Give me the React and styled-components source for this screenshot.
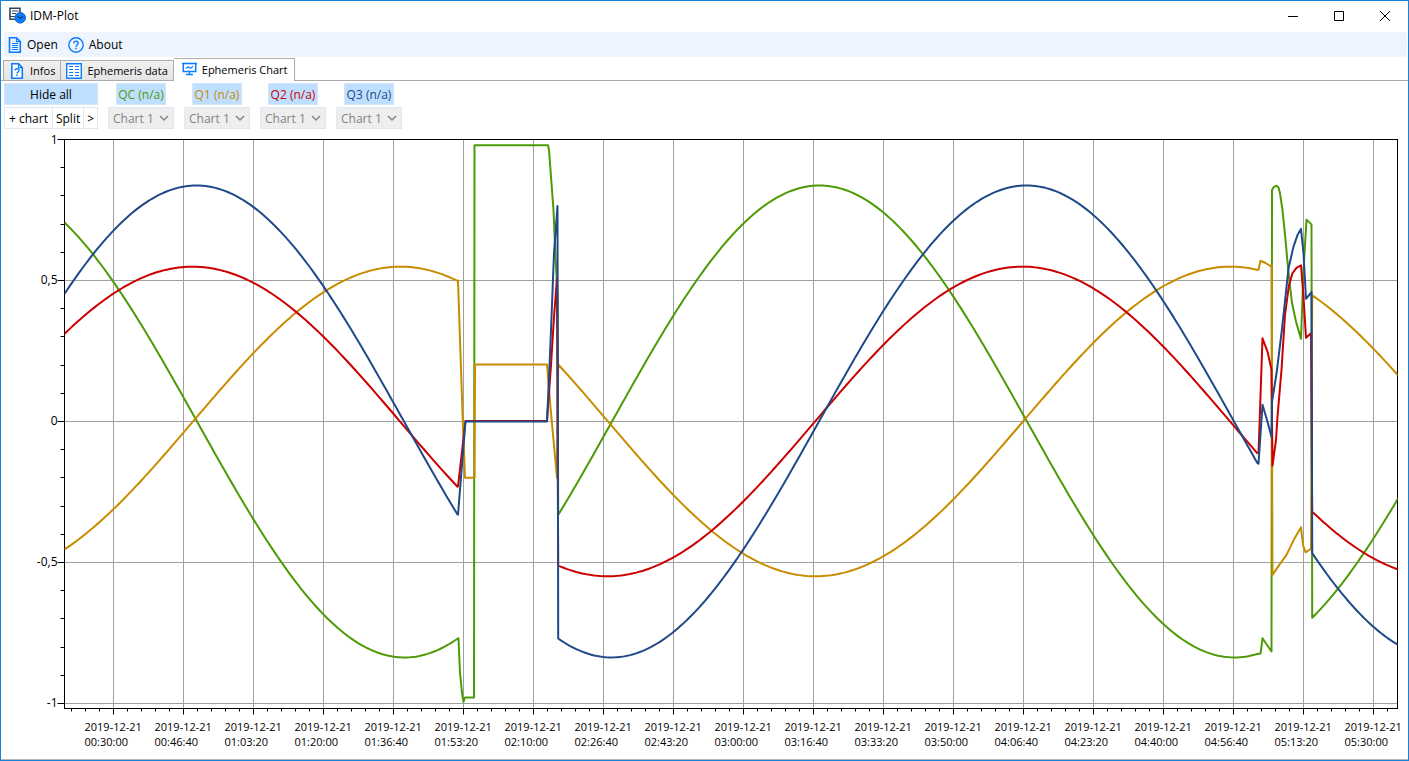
import React, { useLayoutEffect, useRef, useState } from "react";
import styled, { createGlobalStyle, css } from "styled-components";

const FONT = '"Open Sans", "Noto Sans", sans-serif';
const BLUE = "#0a7cff";

const GlobalStyle = createGlobalStyle`
  * {
    box-sizing: border-box;
  }

  body {
    margin: 0;
    background-color: white;
    color: black;
    font-family: ${FONT};
    font-size: 12px;
  }

  button, select {
    font: inherit;
    color: inherit;
  }
`;

const Window = styled.div`
  display: flex;
  flex-direction: column;
  height: 100vh;
  min-height: 400px;
  border: 1px solid #1883d7;
  background-color: white;
`;

const TitleBar = styled.header`
  display: flex;
  align-items: center;
  height: 31px;
  flex-shrink: 0;
  padding: 0 0 2px 8px;
`;

const Title = styled.h1`
  flex: 1;
  margin: 0 0 0 4px;
  font-size: 12px;
  font-weight: 400;
`;

const WindowButton = styled.button`
  display: flex;
  align-items: center;
  justify-content: center;
  width: 46px;
  height: 29px;
  padding: 0;
  border: none;
  background: none;

  &:hover {
    background-color: #e5e5e5;
  }
`;

const ToolBar = styled.nav`
  display: flex;
  align-items: center;
  gap: 10px;
  height: 25px;
  flex-shrink: 0;
  margin: 0 1px 0 3px;
  padding: 0 4px;
  border-radius: 3px;
  background-color: #edf4fd;
`;

const ToolButton = styled.button`
  display: flex;
  align-items: center;
  gap: 5px;
  padding: 0;
  border: none;
  background: none;
`;

const TabStrip = styled.div`
  display: flex;
  align-items: flex-end;
  height: 24px;
  flex-shrink: 0;
  padding-left: 2px;
  border-bottom: 1px solid #acacac;
`;

const Tab = styled.button`
  display: flex;
  align-items: center;
  gap: 5px;
  height: 20px;
  padding: 0 5px;
  border: 1px solid #acacac;
  border-bottom: none;
  background: linear-gradient(#f0f0f0, #e5e5e5);
  font-size: 11px;
  white-space: nowrap;

  & + & {
    border-left: none;
  }

  ${props =>
    props.$active &&
    css`
      height: 23px;
      margin-bottom: -1px;
      padding: 0 7px 2px 8px;
      background: white;
    `}
`;

const Controls = styled.div`
  display: flex;
  gap: 10px;
  flex-shrink: 0;
  padding: 2px 3px 0;
`;

const Column = styled.div`
  display: flex;
  flex-direction: column;
  align-items: center;
  gap: 2px;
  width: ${props => props.$width}px;
`;

const ButtonRow = styled.div`
  display: flex;
  width: 100%;
`;

const SmallButton = styled.button`
  flex: ${props => (props.$grow ? 1 : "none")};
  height: 22px;
  padding: 0 4px;
  border: 1px solid #e2e8f2;
  background-color: white;
  white-space: nowrap;

  & + & {
    border-left: none;
    padding: 0 3px;
  }
`;

const ToggleButton = styled.button`
  height: 22px;
  width: ${props => (props.$wide ? "100%" : "50px")};
  padding: 0;
  border: 1px solid #d4e6f8;
  background-color: #bedfff;
  color: ${props => props.$color || "black"};
  white-space: nowrap;
`;

const SelectBox = styled.div`
  position: relative;
  width: 100%;
  height: 22px;
  color: #838383;

  select {
    appearance: none;
    width: 100%;
    height: 100%;
    padding: 0 0 0 4px;
    border: 1px solid #e2e8f2;
    border-radius: 0;
    background-color: #eeeeee;
    opacity: 1;
  }

  svg {
    position: absolute;
    top: 8px;
    right: 5px;
    pointer-events: none;
  }
`;

const ChartArea = styled.main`
  flex: 1;
  min-height: 0;
  overflow: hidden;
  border-bottom: 1px solid #b8b8b8;

  svg {
    display: block;
  }
`;

const AxisText = styled.text`
  font-family: ${FONT};
  font-size: ${props => props.$size}px;
  fill: black;
`;

const AppIcon = () => (
  <svg width="17" height="17" viewBox="0 0 17 17" fill="none">
    <path d="M1 1.2H11V6M1 0.5V12.3H6" stroke="#34465c" strokeWidth="1.6" />
    <path d="M3 4H9.5M3 6.5H7M1 9.5H6" stroke="#34465c" strokeWidth="1.2" />
    <circle cx="11.2" cy="10.8" r="5.3" fill={BLUE} stroke="#1c5fb4" />
    <path d="M8.3 9L11 11.4L14 9.6" stroke="#173f78" strokeWidth="1.3" />
  </svg>
);

const OpenIcon = () => (
  <svg width="14" height="16" viewBox="0 0 14 16" fill="none" stroke={BLUE}>
    <path d="M1.5 0.8H8.5L12.3 4.6V15.2H1.5Z" strokeWidth="1.6" />
    <path d="M8.5 1V4.6H12" strokeWidth="1.2" />
    <path d="M4 6.5H10M4 8.5H10M4 10.5H10M4 12.5H10" />
  </svg>
);

const AboutIcon = () => (
  <svg width="16" height="16" viewBox="0 0 16 16" fill="none" stroke={BLUE}>
    <circle cx="8" cy="8" r="7.2" strokeWidth="1.4" />
    <path
      d="M5.9 6.3C5.9 3.4 10.2 3.5 10.2 6.1C10.2 7.7 8.1 7.7 8.1 9.7"
      strokeWidth="1.4"
    />
    <path d="M8.1 10.8V12.3" strokeWidth="1.5" />
  </svg>
);

const InfosIcon = () => (
  <svg width="16" height="16" viewBox="0 0 16 16" fill="none" stroke={BLUE}>
    <path d="M2.8 0.8H9.5L13.3 4.6V15.2H2.8Z" fill="white" strokeWidth="1.6" />
    <path d="M9.5 1V4.6H13" strokeWidth="1.2" />
    <path
      d="M6 7.6C6 5.1 10 5.2 10 7.5C10 9 8 9 8 10.6"
      strokeWidth="1.4"
    />
    <path d="M8 11.5V13" strokeWidth="1.5" />
  </svg>
);

const TableIcon = () => (
  <svg width="16" height="16" viewBox="0 0 16 16" fill="none" stroke={BLUE}>
    <path d="M0.7 0.7H15.3V15.3H0.7Z" fill="white" strokeWidth="1.4" />
    <path d="M3 3.5H7M3 6.5H7M3 9.5H7M3 12.5H7" strokeWidth="1.2" />
    <path d="M9 3.5H13M9 6.5H13M9 9.5H13M9 12.5H13" strokeWidth="1.2" />
  </svg>
);

const ChartIcon = () => (
  <svg width="15" height="14" viewBox="0 0 15 14" fill="none" stroke={BLUE}>
    <path d="M0 1.5H15" strokeWidth="1.6" />
    <path d="M1.3 1.5V9.5H13.7V1.5" strokeWidth="1.5" />
    <path d="M4 6.5L6.2 4.7L8.5 6.3L11 4.2" strokeWidth="1.2" />
    <path d="M7.5 9.5V12M4 12.5H11" strokeWidth="1.4" />
  </svg>
);

const Chevron = () => (
  <svg width="10" height="7" viewBox="0 0 10 7" fill="none">
    <path d="M1 1L5 5L9 1" stroke="#838383" strokeWidth="1.5" />
  </svg>
);

// One sample every 100/7 s, starting at 00:18:20.
const START = 1100;
const SAMPLE = 100 / 7;
const SAMPLES = 1333;
const PERIOD = 830;

const SERIES = [
  {
    name: "QC",
    color: "#4e9a06",
    amplitude: 0.837,
    peak: -75,
    slew: [
      [[394, -0.769], [395.5, -0.892], [397.5, -0.963], [399, -0.994], [400.5, -0.979],
       [409.5, -0.979], [410, 0.98], [483.5, 0.98], [484.5, 0.963], [486, 0.892],
       [489, 0.75], [491, 0.585], [493, 0.45]],
      [[1196, -0.823], [1198, -0.769], [1207, -0.816], [1207.5, 0.821], [1209.5, 0.832],
       [1212, 0.836], [1214, 0.83], [1215.5, 0.809], [1218, 0.75], [1221, 0.644],
       [1224, 0.527], [1227.5, 0.42], [1231.5, 0.354], [1236.5, 0.293], [1239, 0.537],
       [1242, 0.715], [1247, 0.699]]
    ]
  },
  {
    name: "Q1",
    color: "#c88c00",
    amplitude: 0.549,
    peak: 336,
    slew: [
      [[393.5, 0.5], [398, 0.03], [400.5, -0.2], [410, -0.2], [410.5, 0.202],
       [482.5, 0.202], [486, 0.05], [489, -0.065], [492.5, -0.2]],
      [[1194, 0.538], [1196, 0.57], [1201, 0.562], [1207, 0.549], [1208, -0.544],
       [1215.5, -0.505], [1222, -0.473], [1229.5, -0.418], [1236.5, -0.375],
       [1238.5, -0.438], [1241, -0.464], [1246.5, -0.452]]
    ]
  },
  {
    name: "Q2",
    color: "#cc0000",
    amplitude: 0.549,
    peak: 128,
    slew: [
      [[393.5, -0.23], [401, 0.002], [482.5, 0.002], [486.5, 0.2], [489.5, 0.37],
       [492.5, 0.507]],
      [[1194, -0.113], [1198, 0.295], [1203, 0.248], [1207, 0.183], [1208, -0.157],
       [1211.5, -0.065], [1213, 0.017], [1217, 0.183], [1220.5, 0.378], [1224.5, 0.484],
       [1228, 0.526], [1232, 0.545], [1236.5, 0.554], [1239, 0.443], [1241.5, 0.297],
       [1246.5, 0.313]]
    ]
  },
  {
    name: "Q3",
    color: "#204a87",
    amplitude: 0.837,
    peak: 132,
    slew: [
      [[393.5, -0.33], [401, 0], [482.5, 0], [486, 0.278], [489.5, 0.597], [493, 0.764]],
      [[1194, -0.15], [1198, 0.059], [1202.5, 0.005], [1207, -0.054], [1207.5, 0.07],
       [1212, 0.17], [1217, 0.313], [1221, 0.443], [1224, 0.543], [1229, 0.62],
       [1233, 0.661], [1236.5, 0.683], [1239, 0.596], [1241.5, 0.435], [1247, 0.459]]
    ]
  }
];

const wave = (series, from, to) => {
  const points = [];
  for (let k = from; k <= to; k += 3) {
    points.push([
      k,
      series.amplitude * Math.cos((2 * Math.PI * (k - series.peak)) / PERIOD)
    ]);
  }
  return points;
};

const getPoints = series => [
  ...wave(series, 0, 393),
  ...series.slew[0],
  ...wave(series, 493.7, 1193.5),
  ...series.slew[1],
  ...wave(series, 1247.7, SAMPLES + 3)
];

const pad = n => String(n).padStart(2, "0");

const formatTime = s =>
  `${pad(Math.floor(s / 3600))}:${pad(Math.floor(s / 60) % 60)}:${pad(s % 60)}`;

const MARGIN = { top: 10, right: 11, bottom: 51, left: 63 };
const Y_MIN = -1.018;

const range = (from, to, step) => {
  const values = [];
  for (let v = from; v <= to; v += step) values.push(v);
  return values;
};

const Plot = () => {
  const ref = useRef(null);
  const [size, setSize] = useState({ width: 0, height: 0 });

  useLayoutEffect(() => {
    const measure = () =>
      setSize({
        width: ref.current.clientWidth,
        height: ref.current.clientHeight
      });
    measure();
    const observer = new ResizeObserver(measure);
    observer.observe(ref.current);
    return () => observer.disconnect();
  }, []);

  const width = Math.max(size.width - MARGIN.left - MARGIN.right, 0);
  const height = Math.max(size.height - MARGIN.top - MARGIN.bottom, 0);
  const end = START + SAMPLES * SAMPLE;

  const sampleX = k => (k / SAMPLES) * width;
  const timeX = t => Math.round(((t - START) / (end - START)) * width);
  const valueY = v => ((1 - v) / (1 - Y_MIN)) * height;

  const majorX = range(1800, end, 1000);
  const minorX = range(1200, end, 200);
  const majorY = [1, 0.5, 0, -0.5, -1];
  const minorY = range(-9, 9, 1).map(n => n / 10);

  return (
    <ChartArea ref={ref}>
      <svg width={size.width} height={size.height} role="img" aria-label="Ephemeris chart">
        <defs>
          <clipPath id="plot-area">
            <rect width={width} height={height} />
          </clipPath>
        </defs>
        <g transform={`translate(${MARGIN.left + 0.5} ${MARGIN.top + 0.5})`}>
          <g stroke="#a0a0a0">
            {majorX.map(t => (
              <line key={t} x1={timeX(t)} x2={timeX(t)} y1={0} y2={height} />
            ))}
            {majorY.map(v => (
              <line
                key={v}
                x1={0}
                x2={width}
                y1={Math.round(valueY(v))}
                y2={Math.round(valueY(v))}
              />
            ))}
          </g>
          <g stroke="black">
            <rect width={width} height={height} fill="none" />
            {minorX.map(t => (
              <line key={t} x1={timeX(t)} x2={timeX(t)} y1={height} y2={height + 3} />
            ))}
            {majorX.map(t => (
              <line key={t} x1={timeX(t)} x2={timeX(t)} y1={height} y2={height + 6} />
            ))}
            {minorY.map(v => (
              <line
                key={v}
                x1={-4}
                x2={0}
                y1={Math.round(valueY(v))}
                y2={Math.round(valueY(v))}
              />
            ))}
            {majorY.map(v => (
              <line
                key={v}
                x1={-7}
                x2={0}
                y1={Math.round(valueY(v))}
                y2={Math.round(valueY(v))}
              />
            ))}
          </g>
          <g clipPath="url(#plot-area)" fill="none" strokeWidth="2" strokeLinejoin="round">
            {SERIES.map(series => (
              <polyline
                key={series.name}
                stroke={series.color}
                points={getPoints(series)
                  .map(([k, v]) => `${sampleX(k)},${valueY(v)}`)
                  .join(" ")}
              />
            ))}
          </g>
          {majorY.map(v => (
            <AxisText key={v} $size={12} x={-7} y={valueY(v) + 4} textAnchor="end">
              {String(v).replace(".", ",")}
            </AxisText>
          ))}
          {majorX.map(t => (
            <AxisText key={t} $size={11} y={height + 22}>
              <tspan x={timeX(t) - 29}>2019-12-21</tspan>
              <tspan x={timeX(t) - 29} dy={15}>
                {formatTime(t)}
              </tspan>
            </AxisText>
          ))}
        </g>
      </svg>
    </ChartArea>
  );
};

const App = () => {
  return (
    <>
      <GlobalStyle />
      <Window>
        <TitleBar>
          <AppIcon />
          <Title>IDM-Plot</Title>
          <WindowButton aria-label="Minimize">
            <svg width="10" height="10" stroke="black">
              <path d="M0 5.5H10" />
            </svg>
          </WindowButton>
          <WindowButton aria-label="Maximize">
            <svg width="10" height="10" stroke="black" fill="none">
              <path d="M0.5 0.5H9.5V9.5H0.5Z" />
            </svg>
          </WindowButton>
          <WindowButton aria-label="Close">
            <svg width="10" height="10" stroke="black">
              <path d="M0 0L10 10M10 0L0 10" />
            </svg>
          </WindowButton>
        </TitleBar>
        <ToolBar>
          <ToolButton>
            <OpenIcon />
            Open
          </ToolButton>
          <ToolButton>
            <AboutIcon />
            About
          </ToolButton>
        </ToolBar>
        <TabStrip role="tablist">
          <Tab role="tab">
            <InfosIcon />
            Infos
          </Tab>
          <Tab role="tab">
            <TableIcon />
            Ephemeris data
          </Tab>
          <Tab role="tab" aria-selected="true" $active>
            <ChartIcon />
            Ephemeris Chart
          </Tab>
        </TabStrip>
        <Controls>
          <Column $width={94}>
            <ToggleButton $wide>Hide all</ToggleButton>
            <ButtonRow>
              <SmallButton $grow>+ chart</SmallButton>
              <SmallButton>Split</SmallButton>
              <SmallButton>&gt;</SmallButton>
            </ButtonRow>
          </Column>
          {SERIES.map(series => (
            <Column key={series.name} $width={66}>
              <ToggleButton $color={series.color}>{series.name} (n/a)</ToggleButton>
              <SelectBox>
                <select disabled aria-label={`Chart for ${series.name}`}>
                  <option>Chart 1</option>
                </select>
                <Chevron />
              </SelectBox>
            </Column>
          ))}
        </Controls>
        <Plot />
      </Window>
    </>
  );
};

export default App;
